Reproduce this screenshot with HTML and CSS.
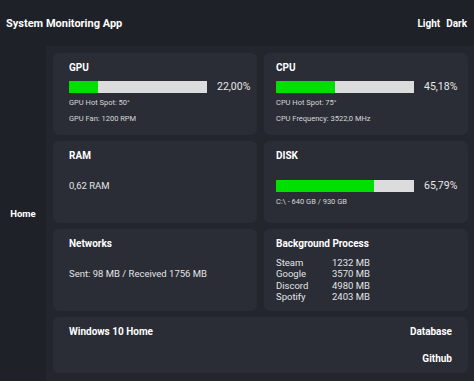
FILE: index.html
```html
<!DOCTYPE html>
<html lang="en">
<head>
  <meta charset="UTF-8">
  <title>System Monitoring App</title>
  <meta name="viewport" content="width=device-width, initial-scale=1.0">
  <link rel="stylesheet" href="styles.css">
</head>
<body>

  <!-- Header -->
  <div class="header">
    <div class="app-title">System Monitoring App</div>
    <div class="theme-switch">
      <span>Light</span>
      <span>Dark</span>
    </div>
  </div>

  <div class="layout">
    <!-- Sidebar -->
    <div class="sidebar">
      <div class="nav-item">Home</div>
    </div>

    <!-- Cards -->
    <div class="main">
      <div class="card">
        <div class="card-title">GPU</div>
        <div class="usage">
          <div class="bar"><div class="bar-fill" style="width: 21%"></div></div>
          <div class="percent">22,00%</div>
        </div>
        <div class="small">GPU Hot Spot: 50°</div>
        <div class="small">GPU Fan: 1200 RPM</div>
      </div>

      <div class="card card-right">
        <div class="card-title">CPU</div>
        <div class="usage">
          <div class="bar"><div class="bar-fill" style="width: 43%"></div></div>
          <div class="percent">45,18%</div>
        </div>
        <div class="small">CPU Hot Spot: 75°</div>
        <div class="small">CPU Frequency: 3522,0 MHz</div>
      </div>

      <div class="card">
        <div class="card-title">RAM</div>
        <div class="value">0,62 RAM</div>
      </div>

      <div class="card card-right">
        <div class="card-title">DISK</div>
        <div class="usage usage-disk">
          <div class="bar"><div class="bar-fill" style="width: 71%"></div></div>
          <div class="percent">65,79%</div>
        </div>
        <div class="small">C:\ - 640 GB / 930 GB</div>
      </div>

      <div class="card">
        <div class="card-title">Networks</div>
        <div class="value">Sent: 98 MB / Received 1756 MB</div>
      </div>

      <div class="card card-right">
        <div class="card-title">Background Process</div>
        <div class="process-list">
          <span>Steam</span><span>1232 MB</span>
          <span>Google</span><span>3570 MB</span>
          <span>Discord</span><span>4980 MB</span>
          <span>Spotify</span><span>2403 MB</span>
        </div>
      </div>

      <div class="card card-footer">
        <div class="card-title">Windows 10 Home</div>
        <div class="links">
          <span>Database</span>
          <span>Github</span>
        </div>
      </div>
    </div>
  </div>

</body>
</html>
```

FILE: styles.css
```css
* {
  box-sizing: border-box;
}

body {
  margin: 0;
  font-family: 'Roboto', sans-serif;
  background: #1e2128;
  color: #e4e4e6;
  height: 381px;
  overflow: hidden;
}

.header {
  display: flex;
  justify-content: space-between;
  align-items: center;
  height: 46px;
  padding: 0 7px 0 6px;
  color: #fff;
  font-weight: 700;
}

.app-title {
  font-size: 11px;
}

.theme-switch {
  display: flex;
  gap: 6px;
  font-size: 10px;
}

.layout {
  display: flex;
  height: 335px;
}

.sidebar {
  flex: 0 0 46px;
  display: flex;
  align-items: center;
  justify-content: center;
  background: #1e2128;
}

.nav-item {
  color: #fff;
  font-weight: 700;
  font-size: 9.5px;
}

.main {
  flex: 1;
  min-width: 0;
  display: grid;
  grid-template-columns: 1fr 1fr;
  grid-template-rows: 82px 82px 82px 56px;
  column-gap: 7px;
  row-gap: 6px;
  padding: 7px 6px 7px 7px;
  background: #23262d;
}

.card {
  min-width: 0;
  background: #2a2d35;
  border-radius: 6px;
  padding: 9px 16px 0;
}

.card-right {
  padding-left: 12px;
}

.card-title {
  color: #fff;
  font-weight: 700;
  font-size: 10px;
  line-height: 12px;
}

.usage {
  display: flex;
  align-items: center;
  gap: 10px;
  margin-top: 6px;
}

.usage-disk {
  margin-top: 17px;
}

.bar {
  flex: 0 0 138px;
  height: 12px;
  background: #dcdcdc;
}

.bar-fill {
  height: 100%;
  background: #00e000;
}

.percent {
  font-size: 10.5px;
  color: #e8e8e8;
}

.small {
  font-size: 7.5px;
  line-height: 12px;
  margin-top: 4px;
  color: #d8d8da;
}

.value {
  font-size: 9.5px;
  line-height: 12px;
  margin-top: 18px;
}

.process-list {
  display: grid;
  grid-template-columns: 56px auto;
  justify-content: start;
  font-size: 9.5px;
  line-height: 11.3px;
  margin-top: 7px;
}

.card-footer {
  grid-column: 1 / 3;
  display: flex;
  justify-content: space-between;
  align-items: flex-start;
}

.links {
  display: flex;
  flex-direction: column;
  align-items: flex-end;
  gap: 15px;
  color: #fff;
  font-weight: 700;
  font-size: 10px;
  line-height: 12px;
}
```
